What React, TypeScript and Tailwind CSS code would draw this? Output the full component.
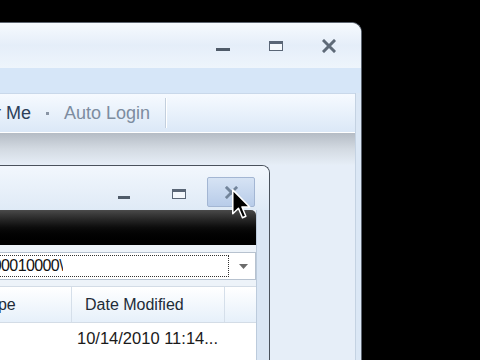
import React from "react";

const ui = { fontFamily: '"Liberation Sans", Arial, sans-serif' };

function MinIcon({ w }: { w: number }) {
  return <div className="h-[3px] bg-[#4f5b69]" style={{ width: w }} />;
}

function MaxIcon() {
  return (
    <div className="w-[14px] h-[10px] border border-[#5a6676] border-t-[3px] bg-[#f4f8fc]" />
  );
}

function CloseGlyph({ size, color }: { size: number; color: string }) {
  return (
    <svg width={size} height={size} viewBox="0 0 14 14">
      <path d="M2 2 L12 12 M12 2 L2 12" stroke={color} strokeWidth="3" strokeLinecap="square" />
    </svg>
  );
}

function Cursor() {
  return (
    <svg width="20" height="31" viewBox="0 0 13 20" className="absolute left-[232px] top-[189px]">
      <path
        d="M0.5 0.5 L0.5 16 L4.2 12.4 L6.8 18.6 L9 17.6 L6.5 11.6 L11.5 11.6 Z"
        fill="#000"
        stroke="#fff"
        strokeWidth="1"
        strokeLinejoin="round"
      />
    </svg>
  );
}

export default function App() {
  return (
    <div className="relative w-[480px] h-[360px] bg-black overflow-hidden" style={ui}>
      {/* ───────── outer window ───────── */}
      <div className="absolute left-[-40px] top-[22px] w-[402px] h-[360px] flex flex-col overflow-hidden rounded-tr-[10px] border-t border-r border-[#5d6570] bg-[#e6eef8]">
        {/* title bar */}
        <div className="h-[45px] shrink-0 flex justify-end pr-[6px] bg-gradient-to-b from-[#f6fafe] via-[#e5eef9] to-[#eef5fc]">
          <div className="w-[53px] flex justify-center pt-[25px]">
            <MinIcon w={14} />
          </div>
          <div className="w-[53px] flex justify-center pt-[18px]">
            <MaxIcon />
          </div>
          <div className="w-[53px] flex justify-center pt-[16px]">
            <CloseGlyph size={14} color="#5e6a78" />
          </div>
        </div>
        <div className="h-[25px] shrink-0 bg-[#d6e6f8]" />

        <div className="flex-1 flex">
          <div className="flex-1 flex flex-col">
            {/* toolbar */}
            <div className="h-[39px] shrink-0 flex items-center border-t border-[#c9d8ea] bg-gradient-to-b from-[#f6faff] to-[#dbe8f7] text-[18px]">
              <div className="w-[71px] flex justify-end overflow-hidden">
                <span className="shrink-0 whitespace-nowrap text-[#2b3f5a]">Remember Me</span>
              </div>
              <span className="ml-[15px] w-[3px] h-[3px] bg-[#8995a5]" />
              <span className="ml-[15px] text-[#7d8ca0] whitespace-nowrap">Auto Login</span>
              <span className="ml-[15px] w-px h-[30px] bg-[#c3cfdd] border-r border-white box-content" />
            </div>
            <div className="h-px shrink-0 bg-white" />
            {/* shadow beneath toolbar */}
            <div className="h-[32px] shrink-0 bg-gradient-to-b from-[#b5bcc5] via-[#d3dae2] to-[#e6eef7]" />
            <div className="flex-1 bg-[#e6eef8]" />
          </div>
          <div className="w-[6px] bg-[#dbe7f5] border-l border-[#c4d2e2]" />
        </div>
      </div>

      {/* ───────── inner window ───────── */}
      <div className="absolute left-[-60px] top-[165px] w-[330px] h-[220px] flex flex-col overflow-hidden rounded-tr-[8px] border-t border-r border-[#4a525c] bg-[#eaf1f9]">
        {/* title bar */}
        <div className="h-[44px] shrink-0 flex justify-end pr-[14px] bg-gradient-to-b from-[#f2f7fd] to-[#dfeaf6]">
          <div className="w-[54px] flex justify-center pt-[30px]">
            <MinIcon w={12} />
          </div>
          <div className="w-[55px] mr-px flex justify-center pt-[23px]">
            <MaxIcon />
          </div>
          <div className="w-[48px] h-[30px] mt-[11px] flex items-center justify-center rounded-[2px] border border-[#a3b6d3] bg-gradient-to-b from-[#d6e3f4] to-[#b8cce9]">
            <CloseGlyph size={13} color="#72849a" />
          </div>
        </div>

        <div className="flex-1 flex">
          <div className="flex-1 flex flex-col bg-[#edf3f9]">
            {/* dark bar */}
            <div className="h-[35px] shrink-0 rounded-tr-[5px] bg-gradient-to-b from-[#4a4a4a] via-[#0c0c0c] to-black" />

            {/* address combo */}
            <div className="mt-[7px] h-[28px] shrink-0 flex border border-[#b7c2cf] bg-white">
              <div className="flex-1 m-[2px] flex items-center border border-dotted border-[#333] overflow-hidden">
                <div className="w-[119px] flex justify-end overflow-hidden">
                  <span className="shrink-0 whitespace-nowrap text-[16px] tracking-[-0.6px] text-[#111]">C:\Data\Users\00010000\</span>
                </div>
              </div>
              <div className="w-[24px] flex items-center justify-center">
                <svg width="9" height="5" viewBox="0 0 9 5">
                  <path d="M0 0 L9 0 L4.5 5 Z" fill="#6b6b6b" />
                </svg>
              </div>
            </div>

            {/* list header */}
            <div className="mt-[6px] h-[37px] shrink-0 flex border-t border-b border-[#d3dce6] bg-gradient-to-b from-white to-[#e6f0fa] text-[16px] text-[#222c38]">
              <div className="w-[32px] border-r border-[#d5dfea]" />
              <div className="w-[100px] pl-[9px] flex items-center border-r border-[#d5dfea]">Type</div>
              <div className="w-[153px] pl-[13px] flex items-center border-r border-[#d5dfea] whitespace-nowrap">
                Date Modified
              </div>
              <div className="flex-1" />
            </div>

            {/* row */}
            <div className="flex-1 bg-white text-[16.5px] text-[#1a1a1a]">
              <div className="h-[30px] flex items-center pl-[137px] whitespace-nowrap">10/14/2010 11:14...</div>
            </div>
          </div>
          <div className="w-[13px] bg-[#dae6f4] border-l border-[#bccbdc]" />
        </div>
      </div>

      <Cursor />
    </div>
  );
}
